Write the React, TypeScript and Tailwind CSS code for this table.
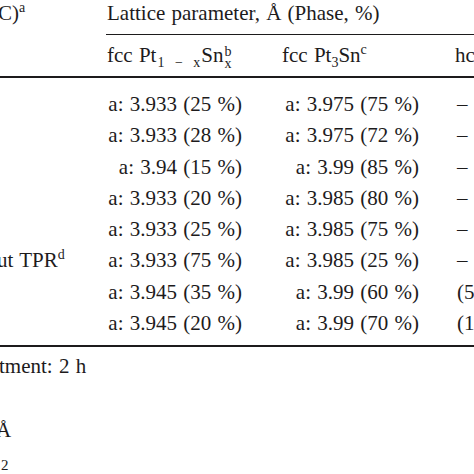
import React from 'react'

interface Row {
  label?: React.ReactNode
  pt1x: string
  pt3sn: string
  hcp: string
}

const rows: Row[] = [
  { pt1x: 'a: 3.933 (25 %)', pt3sn: 'a: 3.975 (75 %)', hcp: '–' },
  { pt1x: 'a: 3.933 (28 %)', pt3sn: 'a: 3.975 (72 %)', hcp: '–' },
  { pt1x: 'a: 3.94 (15 %)', pt3sn: 'a: 3.99 (85 %)', hcp: '–' },
  { pt1x: 'a: 3.933 (20 %)', pt3sn: 'a: 3.985 (80 %)', hcp: '–' },
  { pt1x: 'a: 3.933 (25 %)', pt3sn: 'a: 3.985 (75 %)', hcp: '–' },
  {
    label: (
      <span className="ml-[-3px]">
        ut TPR<sup className="text-[14px] align-[8px] leading-none top-0">d</sup>
      </span>
    ),
    pt1x: 'a: 3.933 (75 %)',
    pt3sn: 'a: 3.985 (25 %)',
    hcp: '–'
  },
  { pt1x: 'a: 3.945 (35 %)', pt3sn: 'a: 3.99 (60 %)', hcp: '(5 %)' },
  { pt1x: 'a: 3.945 (20 %)', pt3sn: 'a: 3.99 (70 %)', hcp: '(10 %)' }
]

export default function App() {
  return (
    <div className="w-[474px] h-[474px] overflow-hidden bg-white text-[#1d1b1c] font-['Liberation_Serif',serif] text-[21px] [word-spacing:1px] whitespace-nowrap">
      {/* Header row 1 */}
      <div className="flex h-[34px] leading-[26px]">
        <div className="w-[107px] shrink-0">
          <span className="ml-[-2px]">C)</span>
          <sup className="text-[14px] align-[8px] leading-none top-0">a</sup>
        </div>
        <div>Lattice parameter, Å (Phase, %)</div>
      </div>
      <div className="ml-[106px] h-px bg-[#1d1b1c]" />

      {/* Header row 2 */}
      <div className="flex h-[41px] pt-[7px] leading-[26px]">
        <div className="w-[107px] shrink-0" />
        <div className="w-[175px] shrink-0">
          fcc Pt
          <sub className="text-[14px] align-[-5px] leading-none bottom-0 ml-px mr-px [word-spacing:7px]">1 − x</sub>
          Sn
          <span className="inline-flex flex-col text-[14px] leading-[12px] align-[6px] ml-px">
            <span>b</span>
            <span>x</span>
          </span>
        </div>
        <div className="w-[175px] shrink-0">
          fcc Pt<sub className="text-[14px] align-[-5px] leading-none bottom-0">3</sub>Sn
          <sup className="text-[14px] align-[8px] leading-none top-0">c</sup>
        </div>
        <div className="ml-[-2px]">hcp PtSn</div>
      </div>
      <div className="h-[2px] bg-[#1d1b1c]" />

      {/* Body */}
      <div className="pt-[11px] pb-[5px] h-[267px]">
        {rows.map((row, i) => (
          <div key={i} className="flex h-[31.3px] leading-[31.3px]">
            <div className="w-[107px] shrink-0">{row.label}</div>
            <div className="w-[175px] shrink-0 text-right pr-[40px]">{row.pt1x}</div>
            <div className="w-[175px] shrink-0 text-right pr-[38px]">{row.pt3sn}</div>
            <div>{row.hcp}</div>
          </div>
        ))}
      </div>
      <div className="h-[2px] bg-[#1d1b1c]" />

      {/* Footnotes */}
      <div className="mt-[6px] leading-[26px]">
        <div className="ml-[-1px]">tment: 2 h</div>
        <div className="mt-[38px] ml-[-4px]">Å</div>
        <div className="mt-[12px] text-[15px] leading-[20px] ml-[1px]">2</div>
      </div>
    </div>
  )
}
